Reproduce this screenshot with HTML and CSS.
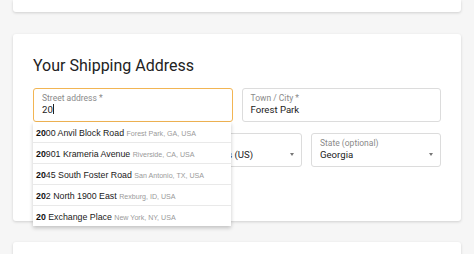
FILE: index.html
```html
<!DOCTYPE html>
<html>
<head>
<meta charset="utf-8">
<link rel="stylesheet" href="styles.css">
</head>
<body>
<div class="page">
  <div class="card card-top"></div>
  <div class="card card-main">
    <h2 class="title">Your Shipping Address</h2>
    <div class="row row-two">
      <div class="field field-focus">
        <div class="label">Street address *</div>
        <div class="value">20<span class="caret"></span></div>
        <ul class="suggest">
          <li><b>20</b>00 Anvil Block Road <span class="sub">Forest Park, GA, USA</span></li>
          <li><b>20</b>901 Krameria Avenue <span class="sub">Riverside, CA, USA</span></li>
          <li><b>20</b>45 South Foster Road <span class="sub">San Antonio, TX, USA</span></li>
          <li><b>20</b>2 North 1900 East <span class="sub">Rexburg, ID, USA</span></li>
          <li><b>20</b> Exchange Place <span class="sub">New York, NY, USA</span></li>
        </ul>
      </div>
      <div class="field">
        <div class="label">Town / City *</div>
        <div class="value">Forest Park</div>
      </div>
    </div>
    <div class="row row-three">
      <div class="field"></div>
      <div class="field select">
        <div class="value value-country">United States (US)</div>
        <span class="arrow"></span>
      </div>
      <div class="field select">
        <div class="label">State (optional)</div>
        <div class="value">Georgia</div>
        <span class="arrow"></span>
      </div>
    </div>
  </div>
  <div class="card card-bottom"></div>
</div>
</body>
</html>
```

FILE: styles.css
```css
html, body {
  margin: 0;
  padding: 0;
  background: #f6f6f6;
  height: 254px;
  overflow: hidden;
}
body {
  font-family: Roboto, "Noto Sans", Arial, sans-serif;
  color: #222;
}
.page {
  padding: 0 13px;
}
.card {
  background: #fff;
  border-radius: 3px;
  box-shadow: 0 1px 3px rgba(0, 0, 0, 0.16);
}
.card-top {
  height: 12px;
  border-radius: 0 0 3px 3px;
}
.card-main {
  margin-top: 22px;
  height: 187px;
  box-sizing: border-box;
  padding: 21px 20px 0;
}
.card-bottom {
  margin-top: 21px;
  height: 40px;
}
.title {
  margin: 0 0 12px;
  font-size: 16px;
  line-height: 21px;
  font-weight: 400;
  color: #222;
}
.row {
  display: grid;
  column-gap: 9px;
}
.row-two {
  grid-template-columns: 1fr 1fr;
}
.row-three {
  margin-top: 11px;
  grid-template-columns: 124px 136px 1fr;
}
.field {
  position: relative;
  height: 34px;
  box-sizing: border-box;
  border: 1px solid #dcdcdc;
  border-radius: 3px;
  padding: 4px 8px 0;
  background: #fff;
}
.field-focus {
  border-color: #f2b553;
  z-index: 2;
}
.label {
  font-size: 8.5px;
  line-height: 10px;
  color: #8a8a8a;
  white-space: nowrap;
}
.value {
  margin-top: 1px;
  font-size: 9.6px;
  line-height: 12px;
  color: #222;
  white-space: nowrap;
}
.value-country {
  margin-top: 11px;
}
.caret {
  display: inline-block;
  width: 0;
  height: 10px;
  border-left: 1px solid #222;
  vertical-align: -1px;
  margin-left: 0.5px;
}
.arrow {
  position: absolute;
  right: 7px;
  top: 19px;
  width: 0;
  height: 0;
  border-left: 2.5px solid transparent;
  border-right: 2.5px solid transparent;
  border-top: 3px solid #777;
}
.suggest {
  position: absolute;
  left: -1px;
  top: 100%;
  margin: 1px 0 0;
  padding: 0;
  list-style: none;
  width: 198px;
  background: #fff;
  box-shadow: 0 2px 4px rgba(0, 0, 0, 0.22);
  font-family: "Liberation Sans", Arial, sans-serif;
}
.suggest li {
  padding: 2px 0 0 3px;
  height: 18px;
  line-height: 18px;
  font-size: 8.8px;
  color: #1a1a1a;
  border-bottom: 1px solid #e9e9e9;
  white-space: nowrap;
  overflow: hidden;
}
.suggest li:last-child {
  border-bottom: none;
}
.suggest b {
  font-weight: 700;
  color: #111;
}
.sub {
  font-size: 7.1px;
  color: #9a9a9a;
}
```
